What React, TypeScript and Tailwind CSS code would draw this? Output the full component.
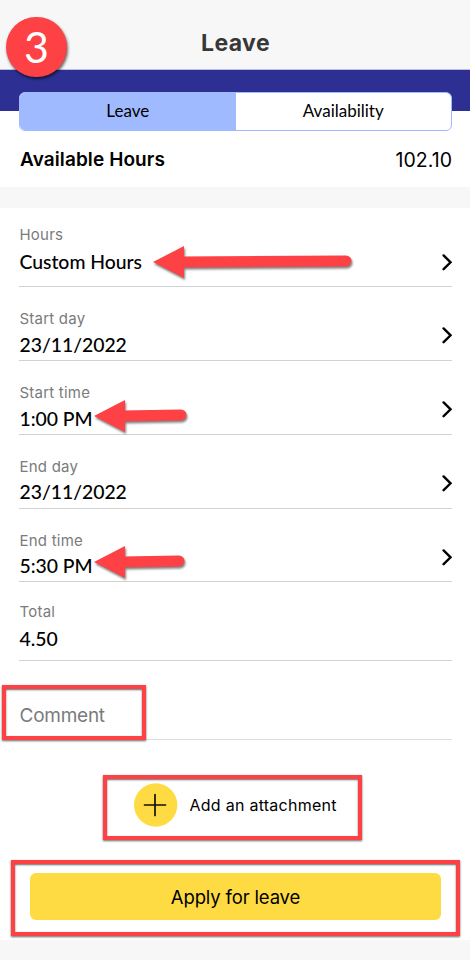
import type { ReactNode } from "react";

const LATO = "font-['Lato','Liberation_Sans',sans-serif]";
const VALUE = "text-[19.4px] leading-[26px] font-medium tracking-[-0.03px]";

function Chevron() {
  return (
    <svg width="10" height="17" viewBox="0 0 10 17" className="shrink-0" fill="none">
      <path d="M1.6 1.4 8.6 8.3 1.6 15.2" stroke="#000" strokeWidth="2.4" strokeLinecap="round" strokeLinejoin="miter" />
    </svg>
  );
}

function Field({ label, className, children, chevron }: { label: string; className: string; children: ReactNode; chevron?: string }) {
  return (
    <div className={`mr-[18px] ml-[19px] flex justify-between border-b border-[#d2d2d2] pl-[0.5px] ${className}`}>
      <div className="flex flex-col">
        <span className="text-[15px] leading-[20px] tracking-[0.22px] text-[#7b7b7b]">{label}</span>
        {children}
      </div>
      {chevron && <div className={chevron}><Chevron /></div>}
    </div>
  );
}

function Arrow({ className, length, slope }: { className: string; length: number; slope: number }) {
  const end = length - 6;
  return (
    <svg
      className={`absolute overflow-visible drop-shadow-[1px_2px_1px_rgba(0,0,0,0.5)] ${className}`}
      width={length}
      height="32"
      viewBox={`0 0 ${length} 32`}
    >
      <path d="M0 16 31 0V32Z" fill="#fd4144" />
      <path d={`M28 16 L${end} ${16 + slope}`} stroke="#fd4144" strokeWidth="11" strokeLinecap="round" />
    </svg>
  );
}

function Highlight({ className }: { className: string }) {
  return (
    <div
      className={`absolute border-4 border-[#fd4144] shadow-[0_1px_2px_rgba(0,0,0,0.6),inset_0_1px_2px_rgba(0,0,0,0.6)] ${className}`}
    />
  );
}

export default function App() {
  return (
    <div className="relative flex h-[960px] w-[470px] flex-col overflow-hidden bg-[#f7f7f7] font-['Inter','Liberation_Sans',sans-serif] text-black">
      <header className="flex h-[70px] shrink-0 justify-center border-b border-[#bfc0d6] pt-[29px] pl-[1px]">
        <h1 className="text-[23px] leading-[28px] font-bold tracking-[0.4px] text-[#373737]">Leave</h1>
      </header>

      <section className="h-[117px] shrink-0 bg-white">
        <div className="h-[41px] bg-[#2d3092] pt-[22px]">
          <div className={`mr-[18px] ml-[19px] flex h-[39px] overflow-hidden rounded-[6px] border border-[#a0baff] bg-white text-[17px] leading-[36px] ${LATO}`}>
            <div className="flex-1 bg-[#a0baff] text-center">Leave</div>
            <div className="flex-1 text-center">Availability</div>
          </div>
        </div>
        <div className="mr-[18px] ml-[20px] flex justify-between pt-[36px] text-[19px] leading-[26px]">
          <span className="font-semibold tracking-[0.1px]">Available Hours</span>
          <span className="text-[19.5px] tracking-[0.05px]">102.10</span>
        </div>
      </section>

      <main className="mt-[21px] flex h-[732px] shrink-0 flex-col bg-white">
        <Field label="Hours" className="h-[79px] pt-[17px]" chevron="pt-[29px]">
          <span className={`pt-[4px] ${VALUE} ${LATO}`}>Custom Hours</span>
        </Field>
        <Field label="Start day" className="h-[74px] pt-[22px]" chevron="pt-[18px]">
          <span className={`pt-[3px] ${VALUE} ${LATO}`}>23/11/2022</span>
        </Field>
        <Field label="Start time" className="h-[74px] pt-[22px]" chevron="pt-[18px]">
          <span className={`pt-[3px] ${VALUE} ${LATO}`}>1:00 PM</span>
        </Field>
        <Field label="End day" className="h-[74px] pt-[22px]" chevron="pt-[18px]">
          <span className={`pt-[2px] ${VALUE} ${LATO}`}>23/11/2022</span>
        </Field>
        <Field label="End time" className="h-[73px] pt-[22px]" chevron="pt-[18px]">
          <span className={`pt-[2px] ${VALUE} ${LATO}`}>5:30 PM</span>
        </Field>
        <Field label="Total" className="h-[79px] pt-[20px]">
          <span className={`pt-[4px] ${VALUE} ${LATO}`}>4.50</span>
        </Field>
        <div className="mr-[18px] ml-[19px] h-[79px] border-b border-[#dedede] pt-[42px] pl-[0.5px] text-[19px] leading-[26px] tracking-[-0.25px] text-[#7b7b7b]">
          Comment
        </div>

        <div className="mt-[43px] ml-[134px] flex h-[44px] items-center">
          <svg width="44" height="44" viewBox="0 0 44 44">
            <circle cx="21.7" cy="22" r="21.7" fill="#ffdb43" />
            <path d="M10.5 22h21M21 11.5v21" stroke="#111" strokeWidth="1.7" strokeLinecap="round" />
          </svg>
          <span className="ml-[11.5px] text-[16px] leading-[20px] tracking-[0.26px]">Add an attachment</span>
        </div>

        <button className="mt-[46px] mr-[29px] ml-[30px] h-[47px] rounded-[6px] bg-[#ffdb43] pt-[1px] text-[18.5px] leading-[24px] tracking-[-0.15px]">
          Apply for leave
        </button>
      </main>

      <div className="absolute top-[17px] left-[6px] flex h-[60px] w-[61px] items-center justify-center rounded-full bg-[#fd4144] font-['Lato','Liberation_Sans',sans-serif] text-[43px] leading-[60px] text-white shadow-[1px_2px_3px_rgba(0,0,0,0.6)]">
        3
      </div>

      <Arrow className="top-[246px] left-[153px]" length={199} slope={-1} />
      <Arrow className="top-[400px] left-[94px]" length={93} slope={-1} />
      <Arrow className="top-[546px] left-[94px]" length={91} slope={-1} />

      <Highlight className="top-[685px] left-[2px] h-[55px] w-[144px]" />
      <Highlight className="top-[775px] left-[103px] h-[65px] w-[259px]" />
      <Highlight className="top-[860px] left-[11px] h-[76px] w-[449px]" />
    </div>
  );
}
